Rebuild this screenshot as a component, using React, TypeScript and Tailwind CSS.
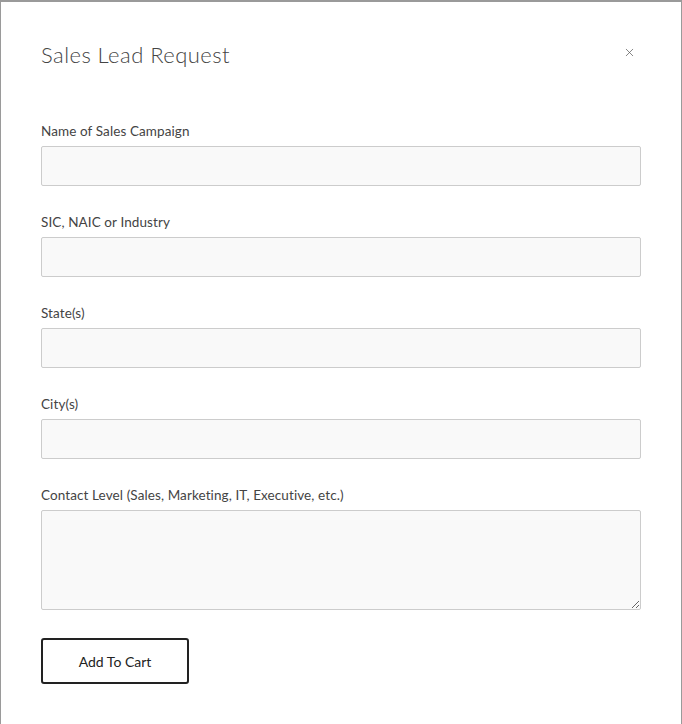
import { X } from 'lucide-react';

const FIELDS = [
  'Name of Sales Campaign',
  'SIC, NAIC or Industry',
  'State(s)',
  'City(s)',
];

export default function App() {
  return (
    <div
      className="w-[682px] h-[724px] bg-white border-t-2 border-x border-[#9a9a9a] overflow-hidden"
      style={{ fontFamily: 'Lato, "Open Sans", sans-serif' }}
    >
      <div className="px-10 pt-[38px]">
        <div className="flex items-center justify-between">
          <h2 className="text-[22px] leading-[30px] font-light tracking-[0.45px] text-[#444]">Sales Lead Request</h2>
          <button className="mr-[5px] -mt-[5px] text-[#555]">
            <X size={13} strokeWidth={1.3} />
          </button>
        </div>

        <form className="mt-[51px] flex flex-col">
          {FIELDS.map((label) => (
            <div key={label} className="mb-[26px]">
              <label className="block text-[13.5px] leading-5 tracking-[0.1px] text-[#444] mb-[5px]">{label}</label>
              <input
                type="text"
                className="block w-[600px] h-10 bg-[#f9f9f9] border border-[#cccccc] rounded-[2px] outline-none"
              />
            </div>
          ))}
          <div>
            <label className="block text-[13.5px] leading-5 tracking-[0.1px] text-[#444] mb-[5px]">
              Contact Level (Sales, Marketing, IT, Executive, etc.)
            </label>
            <textarea className="block w-[600px] h-[100px] bg-[#f9f9f9] border border-[#cccccc] rounded-[2px] outline-none" />
          </div>
          <button
            type="button"
            className="mt-[28px] w-[148px] h-[46px] border-2 border-[#222] rounded-[3px] text-[14px] text-[#222] bg-white"
          >
            Add To Cart
          </button>
        </form>
      </div>
    </div>
  );
}
